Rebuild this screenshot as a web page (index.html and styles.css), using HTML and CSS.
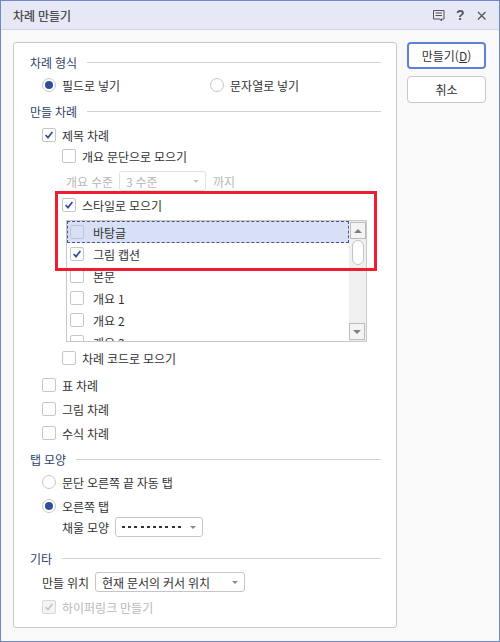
FILE: index.html
```html
<!DOCTYPE html>
<html lang="ko">
<head>
<meta charset="utf-8">
<title>차례 만들기</title>
<link rel="stylesheet" href="styles.css">
</head>
<body>
<div class="window">
  <header class="titlebar">
    <span class="title">차례 만들기</span>
    <div class="title-icons">
      <svg class="ti" width="13" height="13" viewBox="0 0 13 13"><path d="M1.5 1.5h10.5v8.5h-2.5v2l-1.5-2h-6.500z" fill="none" stroke="#555" stroke-width="1"/><path d="M3.500 4h6.500M3.500 6.500h6.500" stroke="#555" stroke-width="1"/></svg>
      <span class="help">?</span>
      <svg class="ti" width="11" height="11" viewBox="0 0 11 11"><path d="M2 2l7.500 7.500M9.500 2l-7.500 7.500" stroke="#555" stroke-width="1.300"/></svg>
    </div>
  </header>
  <main class="body">
    <section class="panel">
      <div class="heading"><span>차례 형식</span><i></i></div>
      <div class="row l1 g3"><span class="radio on"></span><span>필드로 넣기</span><span class="radio second"></span><span>문자열로 넣기</span></div>
      <div class="heading g6"><span>만들 차례</span><i></i></div>
      <div class="row l1 g4"><span class="cb on"><svg viewBox="0 0 14 14"><path d="M3 7l2.800 3L11 3.500" /></svg></span><span>제목 차례</span></div>
      <div class="row l2 g1"><span class="cb"></span><span>개요 문단으로 모으기</span></div>
      <div class="row l3 g5 muted"><span>개요 수준</span><span class="select s-level"><span>3 수준</span><b></b></span><span>까지</span></div>
      <div class="row l2 g4"><span class="cb on"><svg viewBox="0 0 14 14"><path d="M3 7l2.800 3L11 3.500" /></svg></span><span>스타일로 모으기</span></div>
      <div class="list g5">
        <div class="items">
          <div class="item current"><span class="cb"></span><span>바탕글</span></div>
          <div class="item"><span class="cb on"><svg viewBox="0 0 14 14"><path d="M3 7l2.800 3L11 3.500" /></svg></span><span>그림 캡션</span></div>
          <div class="item"><span class="cb"></span><span>본문</span></div>
          <div class="item"><span class="cb"></span><span>개요 1</span></div>
          <div class="item"><span class="cb"></span><span>개요 2</span></div>
          <div class="item"><span class="cb"></span><span>개요 3</span></div>
        </div>
        <div class="scroll">
          <span class="sbtn"><b class="up"></b></span>
          <span class="thumb"></span>
          <span class="sbtn down-btn"><b class="down"></b></span>
        </div>
      </div>
      <div class="row l2 g6"><span class="cb"></span><span>차례 코드로 모으기</span></div>
      <div class="row l1 g7"><span class="cb"></span><span>표 차례</span></div>
      <div class="row l1 g4"><span class="cb"></span><span>그림 차례</span></div>
      <div class="row l1 g4"><span class="cb"></span><span>수식 차례</span></div>
      <div class="heading g6"><span>탭 모양</span><i></i></div>
      <div class="row l1 g3"><span class="radio"></span><span>문단 오른쪽 끝 자동 탭</span></div>
      <div class="row l1 g4"><span class="radio on"></span><span>오른쪽 탭</span></div>
      <div class="row l2 g1"><span>채울 모양</span><span class="select s-fill"><span class="dashes"></span><b></b></span></div>
      <div class="heading g11"><span>기타</span><i></i></div>
      <div class="row l1 g4"><span>만들 위치</span><span class="select s-place"><span>현재 문서의 커서 위치</span><b></b></span></div>
      <div class="row l1 g5 muted"><span class="cb dis"><svg viewBox="0 0 14 14"><path d="M3 7l2.800 3L11 3.500" /></svg></span><span>하이퍼링크 만들기</span></div>
    </section>
    <aside class="actions">
      <button class="btn primary" type="button">만들기(<u>D</u>)</button>
      <button class="btn" type="button">취소</button>
    </aside>
  </main>
  <div class="callout"></div>
</div>
</body>
</html>
```

FILE: styles.css
```css
* { box-sizing: border-box; }
html, body { margin: 0; padding: 0; }
body { font-family: "Noto Sans CJK KR", "Noto Sans", sans-serif; font-size: 12px; word-spacing: -0.5px; color: #333; background: #f9f9f9; }
.window { position: relative; width: 500px; height: 642px; border: 1px solid #6f88c8; background: #f9f9f9; overflow: hidden; }
.titlebar { height: 29px; background: #e6e9f5; border-bottom: 1px solid #d2d6e8; display: flex; align-items: center; justify-content: space-between; padding: 0 12px; }
.title { font-size: 12px; color: #3a3a3a; -webkit-text-stroke: 0.2px #3a3a3a; }
.title-icons { display: flex; align-items: center; }
.title-icons .ti:first-child { margin-right: 11px; }
.help { font: bold 14px "Liberation Sans", sans-serif; color: #555; margin-right: 12px; width: 8px; }
.body { display: flex; align-items: flex-start; gap: 10px; padding: 12px; }
.panel { width: 384px; height: 586px; background: #fff; border: 1px solid #c8c8c8; border-radius: 3px; padding: 9px 15px 0 16px; }
.actions { width: 79px; display: flex; flex-direction: column; gap: 7px; }
.btn { height: 27px; padding: 0; background: #fff; border: 1px solid #c8c8c8; border-radius: 4px; font: inherit; color: #333; }
.btn.primary { border: 2px solid #5f80d6; }
.heading { height: 20px; display: flex; align-items: center; gap: 10px; color: #2f3f6e; }
.heading i { flex: 1; height: 1px; background: #d2d2d2; margin-top: 1px; }
.row { height: 20px; display: flex; align-items: center; }
.l1 { margin-left: 12px; }
.l2 { margin-left: 32px; }
.l3 { margin-left: 36px; }
.g1 { margin-top: 1px; }
.g3 { margin-top: 3px; }
.g4 { margin-top: 4px; }
.g5 { margin-top: 5px; }
.g6 { margin-top: 6px; }
.g7 { margin-top: 7px; }
.g11 { margin-top: 11px; }
.muted { color: #b8b8b8; }
.cb { width: 14px; height: 14px; flex: none; margin-right: 6px; border: 1px solid #c6c6c6; border-radius: 2px; background: #fff; display: inline-block; }
.cb svg { display: block; width: 12px; height: 12px; }
.cb path { fill: none; stroke: #2f4e9e; stroke-width: 2; }
.cb.dis { background: #f4f4f4; border-color: #d8d8d8; }
.cb.dis path { stroke: #c8c8c8; }
.radio { width: 14px; height: 14px; flex: none; margin-right: 6px; border: 1px solid #c6c6c6; border-radius: 50%; background: #fff; position: relative; }
.radio.on::after { content: ""; position: absolute; left: 2px; top: 2px; width: 8px; height: 8px; border-radius: 50%; background: #2f4e9e; }
.radio.second { margin-left: 90px; }
.select { height: 20px; display: flex; align-items: center; border: 1px solid #c6c6c6; border-radius: 3px; background: #fff; padding: 0 6px; position: relative; }
.select b { position: absolute; right: 6px; top: 8px; border: 3px solid transparent; border-top: 3px solid #8a8a8a; border-bottom: 0; }
.s-level { width: 87px; margin: 0 7px 0 6px; }
.muted .s-level { border-color: #e2e2e2; }
.muted .s-level b { border-top-color: #c8c8c8; }
.s-fill { width: 88px; margin-left: 6px; }
.s-place { width: 150px; margin-left: 6px; color: #333; }
.dashes { width: 60px; height: 2px; background: repeating-linear-gradient(90deg, #333 0 3px, transparent 3px 6.2px); }
.list { width: 301px; height: 122px; margin-left: 36px; display: flex; border: 1px solid #c8c8c8; background: #fff; overflow: hidden; }
.items { flex: 1; min-width: 0; }
.item { height: 22px; display: flex; align-items: center; padding-left: 3px; }
.item .cb { margin-right: 9px; }
.item.current { background: #d7e0f4; outline: 1px dashed #4a5580; outline-offset: -1px; }
.item.current .cb { background: #d7e0f4; border-color: #bcc4d8; }
.scroll { width: 17px; flex: none; background: #f0f0f0; display: flex; flex-direction: column; align-items: center; position: relative; padding-top: 1px; }
.sbtn { width: 16px; height: 17px; border: 1px solid #bbb; background: #f4f4f4; flex: none; position: relative; }
.down-btn { position: absolute; bottom: 1px; left: 0; }
.sbtn b { position: absolute; left: 3px; top: 6px; border: 4px solid transparent; }
.sbtn .up { border-bottom: 4px solid #808080; border-top: 0; }
.sbtn .down { border-top: 4px solid #808080; border-bottom: 0; }
.thumb { width: 12px; height: 25px; margin-top: 1px; border: 1px solid #c4c4c4; border-radius: 6px; background: #fff; }
.callout { position: absolute; left: 54px; top: 190px; width: 322px; height: 80px; border: 3px solid #f01c30; pointer-events: none; }
```
